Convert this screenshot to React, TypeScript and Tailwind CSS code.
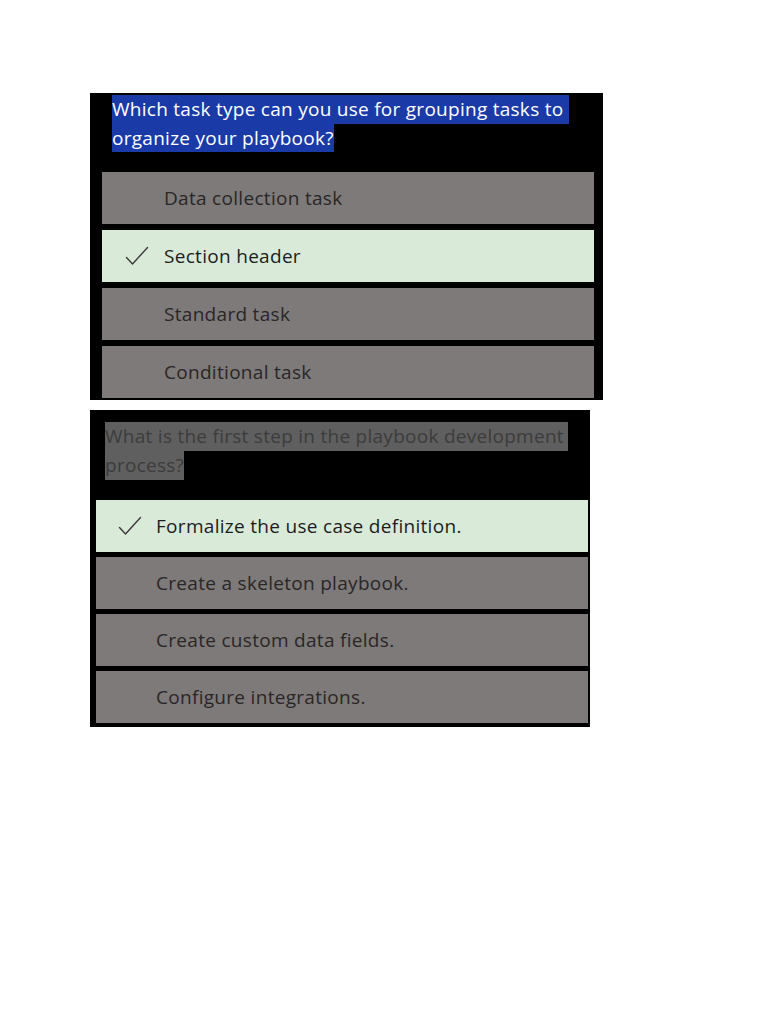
import React from 'react';

type Option = { label: string; correct?: boolean };

const CheckIcon = () => (
  <svg width="24" height="20" viewBox="0 0 24 20" fill="none" className="shrink-0">
    <path d="M1.5 11.5 L7.5 18 L22.5 1.5" stroke="#3a3a3a" strokeWidth="1.4" strokeLinecap="round" strokeLinejoin="round" />
  </svg>
);

const OptionRow = ({ option, indent }: { option: Option; indent: string }) => (
  <div
    className={`flex h-[52px] items-center text-[19px] tracking-[0.3px] ${
      option.correct ? 'bg-[#d9ebd8] text-[#1c1c1c]' : 'bg-[#7e7a79] text-[#2a2626]'
    }`}
  >
    <div className={`flex ${indent} items-center`}>
      {option.correct && <CheckIcon />}
    </div>
    <span>{option.label}</span>
  </div>
);

const firstOptions: Option[] = [
  { label: 'Data collection task' },
  { label: 'Section header', correct: true },
  { label: 'Standard task' },
  { label: 'Conditional task' },
];

const secondOptions: Option[] = [
  { label: 'Formalize the use case definition.', correct: true },
  { label: 'Create a skeleton playbook.' },
  { label: 'Create custom data fields.' },
  { label: 'Configure integrations.' },
];

export default function App() {
  return (
    <div
      className="min-h-[1024px] w-[768px] bg-white pl-[90px] pt-[93px]"
      style={{ fontFamily: '"Open Sans", "Noto Sans", sans-serif' }}
    >
      {/* Question 1 */}
      <div className="w-[513px] bg-black pb-[2px] pl-[12px] pr-[9px] pt-[2px]">
        <div className="pl-[10px] text-[19px] leading-[28.5px] tracking-[0.27px] text-white">
          <div className="w-fit bg-[#1a3aa8] pr-[6px]">Which task type can you use for grouping tasks to</div>
          <div className="w-fit bg-[#1a3aa8]">organize your playbook?</div>
        </div>
        <div className="mt-[20px] flex flex-col gap-[6px]">
          {firstOptions.map(o => (
            <OptionRow key={o.label} option={o} indent="w-[62px] pl-[23px]" />
          ))}
        </div>
      </div>

      {/* Question 2 */}
      <div className="mt-[10px] w-[500px] bg-black pb-[4px] pl-[6px] pr-[2px] pt-[12px]">
        <div className="pl-[9px] text-[19px] leading-[29px] tracking-[0.27px] text-[#3c3c3c]">
          <div className="w-fit bg-[#5f5f5f] pr-[4px]">What is the first step in the playbook development</div>
          <div className="w-fit bg-[#5f5f5f]">process?</div>
        </div>
        <div className="mt-[20px] flex flex-col gap-[5px]">
          {secondOptions.map(o => (
            <OptionRow key={o.label} option={o} indent="w-[60px] pl-[22px]" />
          ))}
        </div>
      </div>
    </div>
  );
}
